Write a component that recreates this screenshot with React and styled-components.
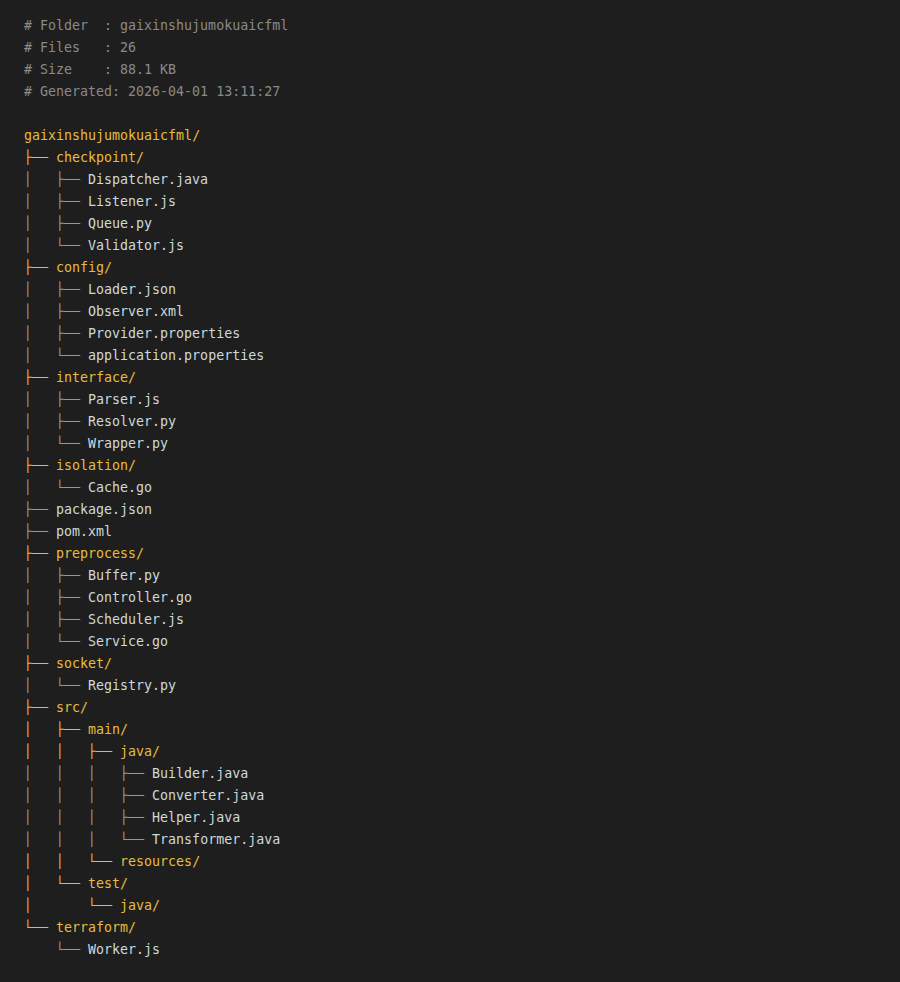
import React from "react";
import styled, { createGlobalStyle } from "styled-components";

const Global = createGlobalStyle`
  html, body { margin: 0; padding: 0; background: #1e1e1e; }
  #root { min-height: 982px; background: #1e1e1e; }
`;

const Listing = styled.pre`
  margin: 0;
  padding: 15px 24px 21px;
  font-family: "DejaVu Sans Mono", "Liberation Mono", monospace;
  font-size: 13.3px;
  line-height: 22px;
  color: #cdd9db;
  background: #1e1e1e;
  white-space: pre;
`;

const Line = styled.div`
  height: 22px;
  color: ${(p) =>
    p.$kind === "dir" ? "#e8bc3e" : p.$kind === "comment" ? "#8a8a8a" : "#cdd9db"};
`;

const Prefix = styled.span`
  color: ${(p) => (p.$dir ? "#e8bc3e" : "#8e9c9c")};
`;

const tree = {
  name: "gaixinshujumokuaicfml",
  children: [
    { name: "checkpoint", children: ["Dispatcher.java", "Listener.js", "Queue.py", "Validator.js"] },
    { name: "config", children: ["Loader.json", "Observer.xml", "Provider.properties", "application.properties"] },
    { name: "interface", children: ["Parser.js", "Resolver.py", "Wrapper.py"] },
    { name: "isolation", children: ["Cache.go"] },
    "package.json",
    "pom.xml",
    { name: "preprocess", children: ["Buffer.py", "Controller.go", "Scheduler.js", "Service.go"] },
    { name: "socket", children: ["Registry.py"] },
    {
      name: "src",
      children: [
        {
          name: "main",
          children: [
            { name: "java", children: ["Builder.java", "Converter.java", "Helper.java", "Transformer.java"] },
            { name: "resources", children: [] },
          ],
        },
        { name: "test", children: [{ name: "java", children: [] }] },
      ],
    },
    { name: "terraform", children: ["Worker.js"] },
  ],
};

function flatten(node, prefix, out) {
  node.children.forEach((child, i) => {
    const last = i === node.children.length - 1;
    const branch = prefix + (last ? "└── " : "├── ");
    if (typeof child === "string") {
      out.push({ prefix: branch, name: child, dir: false });
    } else {
      out.push({ prefix: branch, name: child.name + "/", dir: true });
      flatten(child, prefix + (last ? "    " : "│   "), out);
    }
  });
  return out;
}

const header = [
  "# Folder  : gaixinshujumokuaicfml",
  "# Files   : 26",
  "# Size    : 88.1 KB",
  "# Generated: 2026-04-01 13:11:27",
];

export default function App() {
  const lines = flatten(tree, "", []);
  return (
    <>
      <Global />
      <Listing>
        {header.map((h) => (
          <Line key={h} $kind="comment">{h}</Line>
        ))}
        <Line $kind="blank"> </Line>
        <Line $kind="dir">{tree.name}/</Line>
        {lines.map((l, i) => (
          <Line key={i} $kind={l.dir ? "dir" : "file"}>
            <Prefix $dir={l.dir}>{l.prefix}</Prefix>
            {l.name}
          </Line>
        ))}
      </Listing>
    </>
  );
}
